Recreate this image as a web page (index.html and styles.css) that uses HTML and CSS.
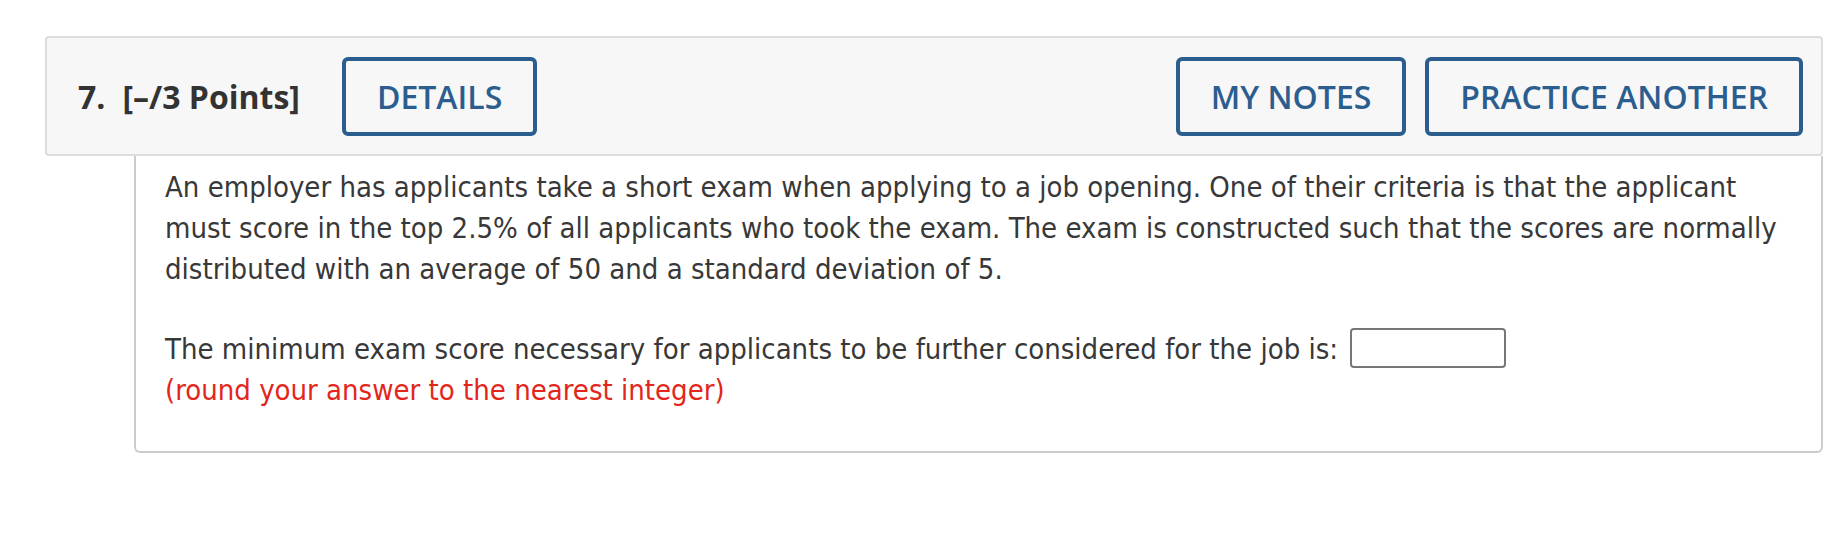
FILE: index.html
```html
<!DOCTYPE html>
<html>
<head>
<meta charset="utf-8">
<link rel="stylesheet" href="styles.css">
</head>
<body>
<div class="question">
  <div class="qhead">
    <div class="qtitle"><span class="qnum">7.</span><span class="qpts">[–/3 Points]</span></div>
    <button class="btn">DETAILS</button>
    <div class="spacer"></div>
    <button class="btn">MY NOTES</button>
    <button class="btn">PRACTICE ANOTHER</button>
  </div>
  <div class="qbody">
    <p class="para">An employer has applicants take a short exam when applying to a job opening. One of their criteria is that the applicant must score in the top 2.5% of all applicants who took the exam. The exam is constructed such that the scores are normally distributed with an average of 50 and a standard deviation of 5.</p>
    <p class="para answer">The minimum exam score necessary for applicants to be further considered for the job is: <input class="ans" type="text"><br><span class="hint">(round your answer to the nearest integer)</span></p>
  </div>
</div>
</body>
</html>
```
FILE: styles.css
```css
html, body {
  margin: 0;
  padding: 0;
  background: #ffffff;
}
.question {
  padding: 36px 11px 0 45px;
}
.qhead {
  display: flex;
  align-items: center;
  height: 116px;
  background: #f7f7f7;
  border: 2px solid #dddddd;
  border-radius: 4px;
  padding: 0 18px 0 31px;
  font-family: "Open Sans", sans-serif;
}
.qtitle {
  font-weight: 700;
  font-size: 32px;
  color: #333333;
  margin-right: 42px;
  white-space: nowrap;
}
.qnum {
  margin-right: 17px;
}
.spacer {
  flex: 1;
}
.btn {
  font-family: "Open Sans", sans-serif;
  font-weight: 600;
  font-size: 32px;
  color: #2b5d8e;
  background: transparent;
  border: 4px solid #2b5d8e;
  border-radius: 6px;
  height: 79px;
  padding: 0 31px;
  margin-left: 19px;
  cursor: pointer;
  white-space: nowrap;
}
.qtitle + .btn {
  margin-left: 0;
}
.qbody {
  margin-left: 89px;
  border: 2px solid #cccccc;
  border-top: none;
  border-radius: 0 0 6px 6px;
  padding: 11px 29px 40px 29px;
  font-family: "DejaVu Sans Condensed", "DejaVu Sans", sans-serif;
  font-size: 29px;
  line-height: 41px;
  color: #383838;
}
.para {
  margin: 0 0 39px 0;
}
.para.answer {
  margin-bottom: 0;
}
.ans {
  width: 156px;
  height: 40px;
  box-sizing: border-box;
  border: 2px solid #777777;
  border-radius: 4px;
  vertical-align: middle;
  margin: -6px 0 0 4px;
  padding: 0;
}
.hint {
  color: #e3261b;
}
```
